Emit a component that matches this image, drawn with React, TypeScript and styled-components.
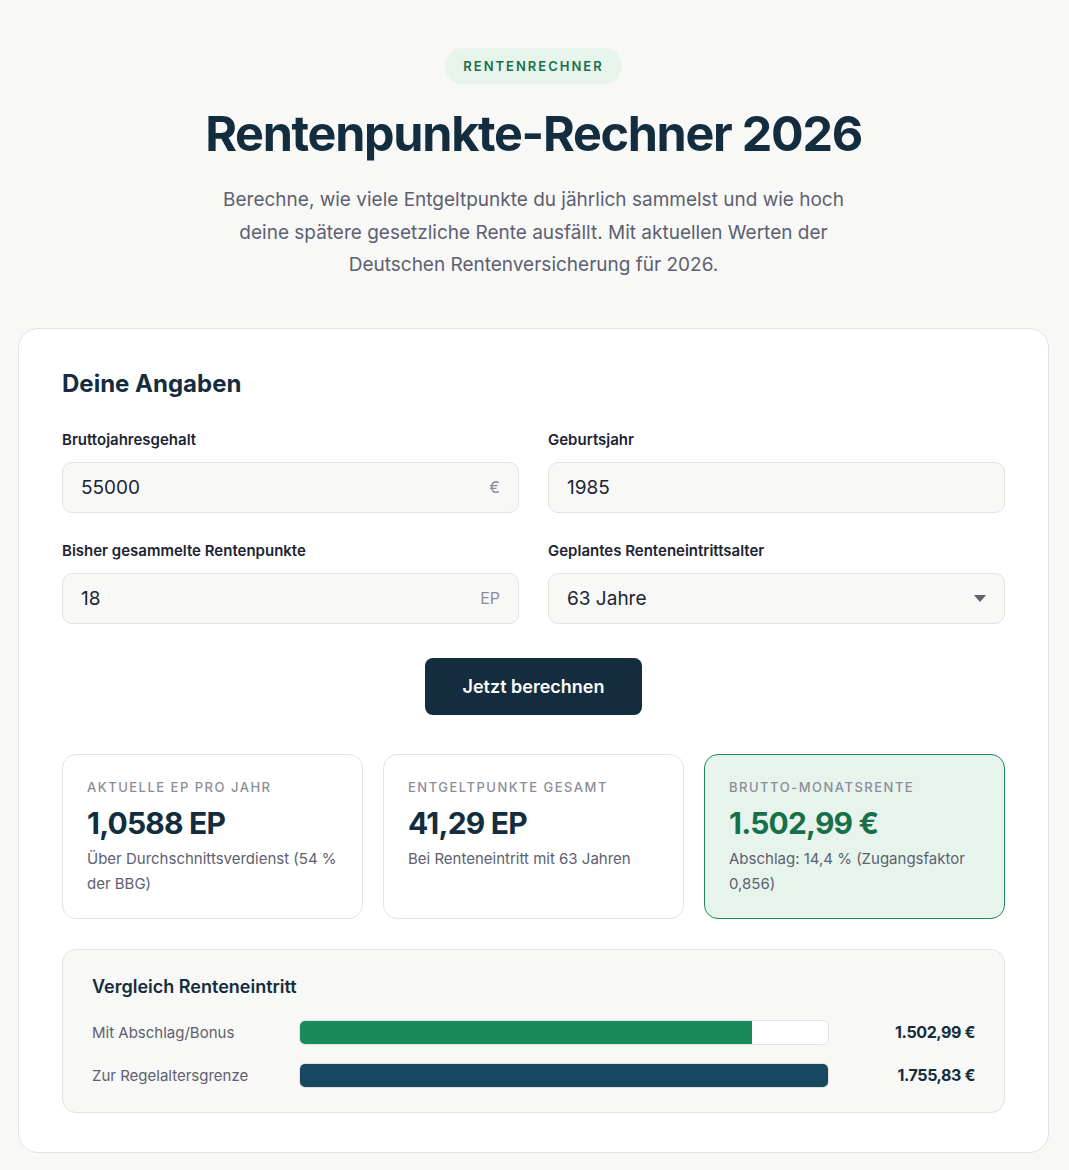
import React from 'react'
import styled, { createGlobalStyle } from 'styled-components'

const colors = {
  ink: '#132d3e',
  text: '#1c2433',
  muted: '#5d6070',
  faint: '#8b8d99',
  green: '#1b8a5a',
  greenDark: '#17704a',
  greenTint: '#e7f4ec',
  field: '#f8f8f6',
  border: '#e4e2dc',
  page: '#f8f8f7',
}

const GlobalStyle = createGlobalStyle`
  * { box-sizing: border-box; }
  body {
    margin: 0;
    background: ${colors.page};
    font-family: Inter, "Noto Sans", sans-serif;
    color: ${colors.text};
  }
`

const Page = styled.main`
  max-width: 1031px;
  margin: 0 18px;
  padding: 48px 0 18px;
`

const Hero = styled.header`
  display: flex;
  flex-direction: column;
  align-items: center;
  text-align: center;
`

const Badge = styled.span`
  display: inline-flex;
  align-items: center;
  height: 36px;
  padding: 0 18px;
  border-radius: 18px;
  background: ${colors.greenTint};
  color: ${colors.greenDark};
  font-size: 13px;
  font-weight: 600;
  letter-spacing: 2px;
`

const Title = styled.h1`
  margin: 22px 0 0;
  font-size: 48.5px;
  line-height: 56px;
  font-weight: 700;
  letter-spacing: -1.3px;
  color: ${colors.ink};
`

const Lead = styled.p`
  margin: 22px 0 0;
  max-width: 640px;
  font-size: 19px;
  line-height: 32.5px;
  color: ${colors.muted};
`

const Card = styled.section`
  margin-top: 46px;
  background: #fff;
  border: 1px solid ${colors.border};
  border-radius: 20px;
  padding: 39px 43px 39px;
`

const SectionTitle = styled.h2`
  margin: 0 0 30px;
  font-size: 24px;
  line-height: 32px;
  font-weight: 700;
  color: ${colors.ink};
`

const FormGrid = styled.div`
  display: grid;
  grid-template-columns: 1fr 1fr;
  column-gap: 29px;
  row-gap: 28px;
`

const Field = styled.label`
  display: flex;
  flex-direction: column;
  gap: 12px;
`

const Label = styled.span`
  font-size: 15px;
  line-height: 20px;
  font-weight: 600;
  color: ${colors.text};
`

const InputBox = styled.div`
  display: flex;
  align-items: center;
  height: 51px;
  padding: 0 18px;
  background: ${colors.field};
  border: 1px solid ${colors.border};
  border-radius: 10px;
  font-size: 19px;
  color: ${colors.text};
`

const Value = styled.span`
  flex: 1;
`

const Unit = styled.span`
  font-size: 16px;
  color: ${colors.faint};
`

// select arrow drawn as a css triangle
const Caret = styled.span`
  width: 0;
  height: 0;
  border-left: 6px solid transparent;
  border-right: 6px solid transparent;
  border-top: 7px solid #5f6170;
`

const Actions = styled.div`
  display: flex;
  justify-content: center;
  margin-top: 34px;
`

const Button = styled.button`
  height: 57px;
  padding: 0 38px;
  border: 0;
  border-radius: 8px;
  background: ${colors.ink};
  color: #fff;
  font-family: inherit;
  font-size: 18px;
  font-weight: 600;
  cursor: pointer;
`

const Results = styled.div`
  display: grid;
  grid-template-columns: repeat(3, 1fr);
  gap: 20px;
  margin-top: 39px;
`

const ResultCard = styled.div<{ $highlight?: boolean }>`
  min-height: 165px;
  padding: 23px 24px 20px;
  border-radius: 14px;
  border: 1px solid ${(p) => (p.$highlight ? colors.green : colors.border)};
  background: ${(p) => (p.$highlight ? colors.greenTint : '#fff')};
`

const ResultLabel = styled.div`
  font-size: 13px;
  line-height: 18px;
  font-weight: 500;
  letter-spacing: 1.5px;
  text-transform: uppercase;
  color: ${colors.faint};
`

const ResultValue = styled.div<{ $highlight?: boolean }>`
  margin-top: 8px;
  font-size: 30px;
  line-height: 38px;
  font-weight: 700;
  letter-spacing: -0.8px;
  color: ${(p) => (p.$highlight ? colors.greenDark : colors.ink)};
`

const ResultNote = styled.div`
  margin-top: 4px;
  font-size: 15px;
  line-height: 25px;
  color: ${colors.muted};
`

const Compare = styled.div`
  margin-top: 30px;
  padding: 24px 29px 24px;
  background: ${colors.field};
  border: 1px solid ${colors.border};
  border-radius: 14px;
`

const CompareTitle = styled.h3`
  margin: 0 0 20px;
  font-size: 18px;
  line-height: 26px;
  font-weight: 600;
  color: ${colors.ink};
`

const Rows = styled.div`
  display: flex;
  flex-direction: column;
  gap: 18px;
`

const BarRow = styled.div`
  display: grid;
  grid-template-columns: 207px 530px 1fr;
  align-items: center;
`

const BarLabel = styled.span`
  font-size: 15px;
  color: ${colors.muted};
`

const Track = styled.div`
  height: 25px;
  border-radius: 6px;
  border: 1px solid ${colors.border};
  background: #fff;
  overflow: hidden;
`

const Fill = styled.div<{ $tone: 'green' | 'ink' }>`
  height: 100%;
  background: ${(p) => (p.$tone === 'green' ? colors.green : '#17485f')};
`

const BarValue = styled.span`
  text-align: right;
  font-size: 16px;
  font-weight: 700;
  letter-spacing: -0.4px;
  color: ${colors.ink};
`

const comparison = [
  { label: 'Mit Abschlag/Bonus', amount: 1502.99, text: '1.502,99 €', tone: 'green' as const },
  { label: 'Zur Regelaltersgrenze', amount: 1755.83, text: '1.755,83 €', tone: 'ink' as const },
]

const maxAmount = Math.max(...comparison.map((c) => c.amount))

export default function App() {
  return (
    <>
      <GlobalStyle />
      <Page>
        <Hero>
          <Badge>RENTENRECHNER</Badge>
          <Title>Rentenpunkte-Rechner 2026</Title>
          <Lead>
            Berechne, wie viele Entgeltpunkte du jährlich sammelst und wie hoch
            deine spätere gesetzliche Rente ausfällt. Mit aktuellen Werten der
            Deutschen Rentenversicherung für 2026.
          </Lead>
        </Hero>

        <Card>
          <SectionTitle>Deine Angaben</SectionTitle>
          <FormGrid>
            <Field>
              <Label>Bruttojahresgehalt</Label>
              <InputBox>
                <Value>55000</Value>
                <Unit>€</Unit>
              </InputBox>
            </Field>
            <Field>
              <Label>Geburtsjahr</Label>
              <InputBox>
                <Value>1985</Value>
              </InputBox>
            </Field>
            <Field>
              <Label>Bisher gesammelte Rentenpunkte</Label>
              <InputBox>
                <Value>18</Value>
                <Unit>EP</Unit>
              </InputBox>
            </Field>
            <Field>
              <Label>Geplantes Renteneintrittsalter</Label>
              <InputBox>
                <Value>63 Jahre</Value>
                <Caret />
              </InputBox>
            </Field>
          </FormGrid>

          <Actions>
            <Button type="button">Jetzt berechnen</Button>
          </Actions>

          <Results>
            <ResultCard>
              <ResultLabel>Aktuelle EP pro Jahr</ResultLabel>
              <ResultValue>1,0588 EP</ResultValue>
              <ResultNote>Über Durchschnittsverdienst (54 % der BBG)</ResultNote>
            </ResultCard>
            <ResultCard>
              <ResultLabel>Entgeltpunkte gesamt</ResultLabel>
              <ResultValue>41,29 EP</ResultValue>
              <ResultNote>Bei Renteneintritt mit 63 Jahren</ResultNote>
            </ResultCard>
            <ResultCard $highlight>
              <ResultLabel>Brutto-Monatsrente</ResultLabel>
              <ResultValue $highlight>1.502,99 €</ResultValue>
              <ResultNote>Abschlag: 14,4 % (Zugangsfaktor 0,856)</ResultNote>
            </ResultCard>
          </Results>

          <Compare>
            <CompareTitle>Vergleich Renteneintritt</CompareTitle>
            <Rows>
              {comparison.map((row) => (
                <BarRow key={row.label}>
                  <BarLabel>{row.label}</BarLabel>
                  <Track>
                    <Fill
                      $tone={row.tone}
                      style={{ width: `${(row.amount / maxAmount) * 100}%` }}
                    />
                  </Track>
                  <BarValue>{row.text}</BarValue>
                </BarRow>
              ))}
            </Rows>
          </Compare>
        </Card>
      </Page>
    </>
  )
}
